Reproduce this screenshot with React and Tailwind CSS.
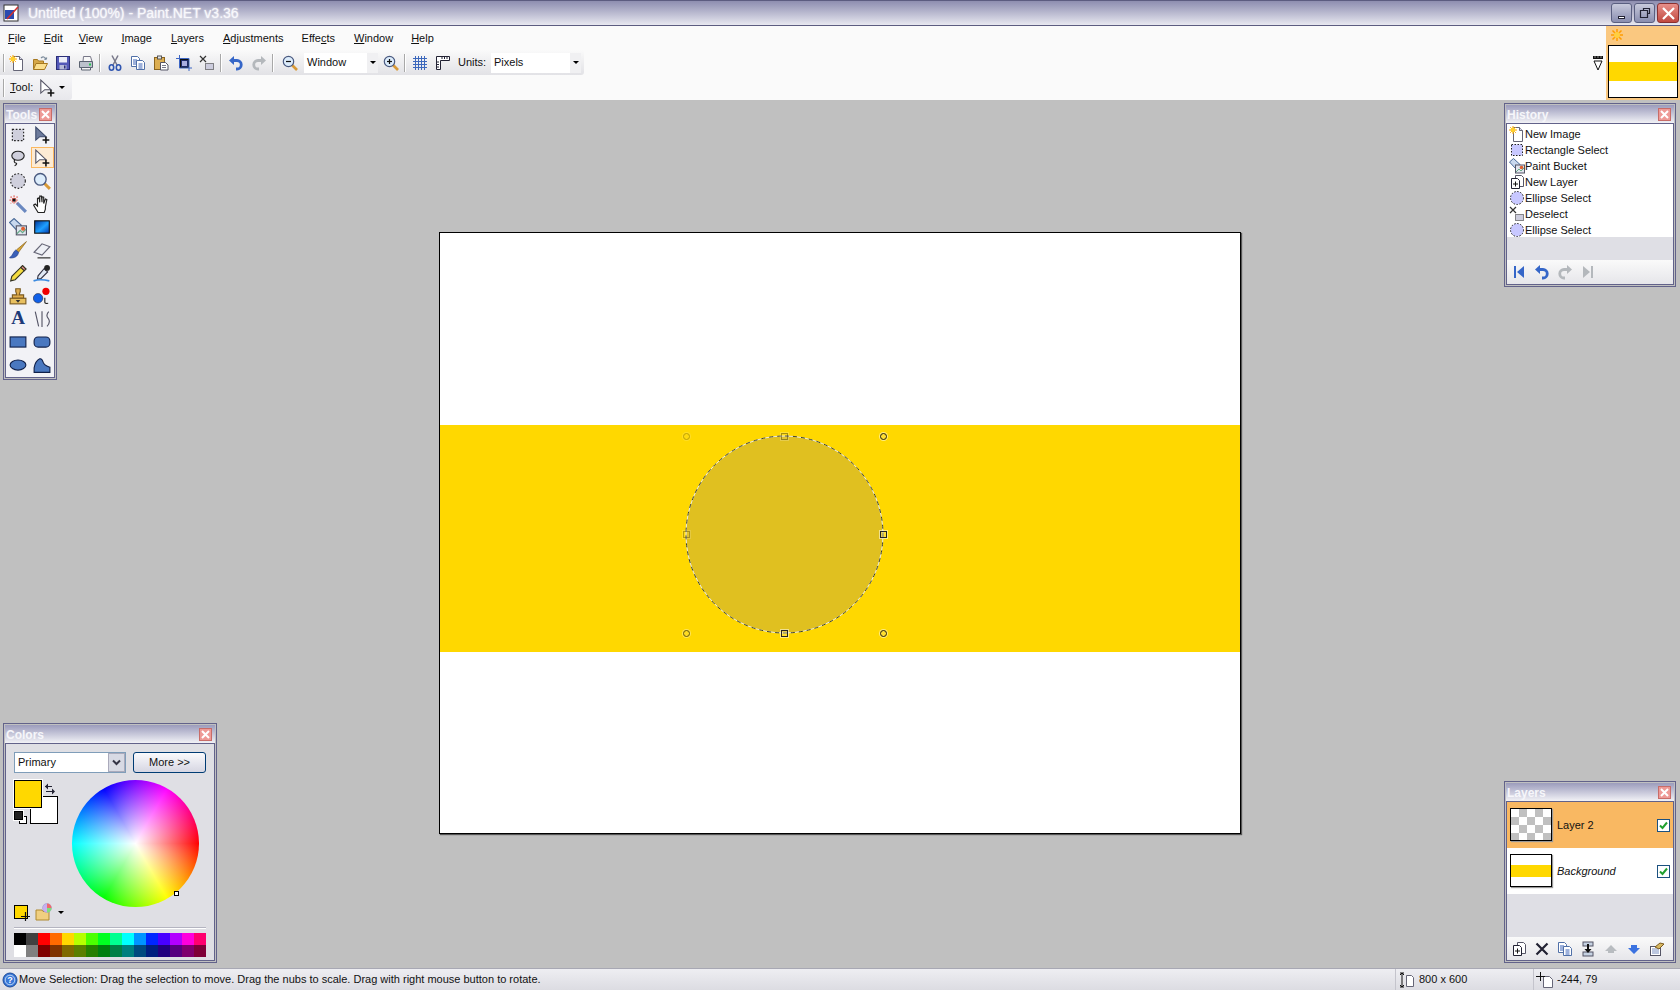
import React from "react";

const I = ({ children, s = 16, className = "" }) => (
  <svg width={s} height={s} viewBox="0 0 16 16" className={"block shrink-0 " + className}>{children}</svg>
);
const Star = () => (
  <g>
    <path d="M4 0v8M0 4h8M1.200 1.200l5.600 5.600M6.800 1.200l-5.600 5.600" stroke="#ffa000" strokeWidth="1" />
    <circle cx="4" cy="4" r="2.400" fill="#ffd02c" />
  </g>
);
const New = () => (
  <I>
    <path d="M4.500 1.500h6l3 3v11h-9z" fill="#fff" stroke="#667" />
    <path d="M10.500 1.500v3h3" fill="#dde" stroke="#667" />
    <Star />
  </I>
);
const Open = () => (
  <I>
    <path d="M1.500 4.500h4l1 1.500h5v8h-10z" fill="#d6a848" stroke="#a67820" />
    <path d="M4 8.500h11.500l-3 6h-11z" fill="#fbdf8e" stroke="#a67820" />
    <path d="M9 3q3-2.500 5 1M14 4.500l-1.800-.5M14 4.500l.8-2" fill="none" stroke="#7a8a9a" strokeWidth="1.200" />
  </I>
);
const Save = () => (
  <I>
    <rect x="1.500" y="1.500" width="13" height="13" fill="#5358b8" stroke="#2b2f78" />
    <rect x="4" y="2" width="8" height="5.500" fill="#eceef8" />
    <rect x="4.500" y="10" width="7" height="4.500" fill="#b6bad8" />
    <rect x="9" y="10.500" width="1.500" height="3" fill="#2b2f78" />
  </I>
);
const Print = () => (
  <I>
    <path d="M5.500 1.500h7l1.500 5h-9z" fill="#f8f8f8" stroke="#778" />
    <path d="M1.500 6.500h13v6h-13z" fill="#bcc2cc" stroke="#5a6270" />
    <path d="M3.500 12.500h9v2.500h-9z" fill="#f4f4f4" stroke="#5a6270" />
    <rect x="11" y="8.500" width="2" height="2" fill="#22c84c" />
  </I>
);
const Cut = () => (
  <I>
    <path d="M5 0.500l5 9.500M11 0.500l-5 9.500" stroke="#778" strokeWidth="1.500" />
    <ellipse cx="4.500" cy="12.500" rx="2.200" ry="2.700" fill="none" stroke="#2f55b0" strokeWidth="1.600" />
    <ellipse cx="11.500" cy="12.500" rx="2.200" ry="2.700" fill="none" stroke="#2f55b0" strokeWidth="1.600" />
  </I>
);
const Lines = ({ x, y, n = 3 }) => (
  <path d={Array.from({ length: n }, (_, i) => `M${x} ${y + i * 2}h4`).join("")} stroke="#3b62b8" />
);
const Copy = () => (
  <I>
    <path d="M1.500 1.500h6l2 2v8h-8z" fill="#fff" stroke="#5070a8" />
    <Lines x={3} y={5} />
    <path d="M6.500 5.500h6l2 2v7h-8z" fill="#fff" stroke="#5070a8" />
    <Lines x={8.500} y={9} n={3} />
  </I>
);
const Paste = () => (
  <I>
    <rect x="1.500" y="2.500" width="10" height="12" fill="#dcae52" stroke="#8a6420" />
    <rect x="4.500" y="1" width="4" height="3" fill="#e6e6e6" stroke="#555" />
    <path d="M7.500 7.500h5l2.500 2.500v5h-7.500z" fill="#fff" stroke="#556" />
    <path d="M9 10.500h4M9 12.500h4" stroke="#778" />
  </I>
);
const Crop = () => (
  <I>
    <rect x="4.500" y="4.500" width="8" height="8" fill="#1c2a68" stroke="#101010" />
    <rect x="6" y="6" width="5" height="5" fill="#a8aee0" />
    <path d="M3.500 0v13h13M0 3.500h13v13" fill="none" stroke="#3d66c4" />
  </I>
);
const Deselect = () => (
  <I>
    <path d="M1 1l6 6M7 1l-6 6" stroke="#333" strokeWidth="1.200" />
    <rect x="6.500" y="8.500" width="8" height="6" fill="#ccd" stroke="#222" strokeDasharray="1 1" />
  </I>
);
const Undo = ({ c = "#3566c8" }) => (
  <I>
    <path d="M4 5.500h5a3.600 3.600 0 0 1 0 8.500h-1" fill="none" stroke={c} strokeWidth="2.800" />
    <path d="M6 1v9l-5-4.500z" fill={c} />
  </I>
);
const Redo = ({ c = "#b4b8bc" }) => (
  <I>
    <path d="M12 5.500h-5a3.600 3.600 0 0 0 0 8.500h1" fill="none" stroke={c} strokeWidth="2.800" />
    <path d="M10 1v9l5-4.500z" fill={c} />
  </I>
);
const Mag = ({ sign, s = 16 }) => (
  <I s={s}>
    <path d="M10 10l5 5" stroke="#d89a38" strokeWidth="2.600" />
    <circle cx="6.500" cy="6.500" r="5.200" fill="#dcecfb" stroke="#4a5a80" strokeWidth="1.200" />
    {sign && <path d="M4 6.500h5" stroke="#111" strokeWidth="1.200" />}
    {sign === "+" && <path d="M6.500 4v5" stroke="#111" strokeWidth="1.200" />}
  </I>
);
const Grid = () => (
  <I><path d="M1 3.500h14M1 6.500h14M1 9.500h14M1 12.500h14M3.500 1v14M6.500 1v14M9.500 1v14M12.500 1v14" stroke="#3c68bc" /></I>
);
const Ruler = () => (
  <I>
    <path d="M1.500 1.500h13v4h-9v9h-4z" fill="#fff" stroke="#223" />
    <path d="M7 2v2M9.500 2v2M12 2v2M2 7h2M2 9.500h2M2 12h2" stroke="#223" />
  </I>
);
const Plus = () => <path d="M11.500 9.500v6M8.500 12.500h6" stroke="#111" strokeWidth="1.400" />;
const ArrowSel = ({ fill = "#fff", stroke = "#556" }) => (
  <I s={18}>
    <path d="M2.500 1v11.500l3.500-3h5.500z" fill={fill} stroke={stroke} />
    <Plus />
  </I>
);
const RectSel = () => (
  <I s={18}><rect x="3" y="3" width="10" height="10" fill="#cfcfdc" stroke="#222" strokeDasharray="1.500 1.500" /></I>
);
const Lasso = () => (
  <I s={18}>
    <ellipse cx="8" cy="6" rx="5.500" ry="4" fill="#cfcfdc" stroke="#222" />
    <path d="M5 9.500q-1 2.500 1 3t-1 2.500" fill="none" stroke="#222" />
  </I>
);
const EllSel = () => (
  <I s={18}><circle cx="8" cy="8" r="6.500" fill="#cfcfdc" stroke="#222" strokeDasharray="1.500 1.500" /></I>
);
const Wand = () => (
  <I s={18}>
    <path d="M7 7l8 8" stroke="#6a88c0" strokeWidth="2.800" />
    <path d="M4.500 0.500v8M0.500 4.500h8M1.500 1.500l6 6M7.500 1.500l-6 6" stroke="#e03020" strokeDasharray="1 1" />
    <circle cx="4.500" cy="4.500" r="1.500" fill="#111" />
  </I>
);
const Hand = () => (
  <I s={18}>
    <path d="M4.500 15.500l-4-6.500 1.500-1 2 2V3l1.500-.5.500 4V1h1.500l.5 5.500V1.500l1.500.5v5.500l1.500-4 1.300.5-1.300 6.500v2l-1 3z" fill="#fff" stroke="#222" />
  </I>
);
const Bucket = ({ s = 18 }) => (
  <I s={s}>
    <path d="M0.500 4l4-3.500 6.500 6-4 4.500z" fill="#c8d8ee" stroke="#4a6a98" />
    <rect x="6.500" y="7" width="9" height="8" fill="#dfe4ee" stroke="#556" />
    <path d="M7 14l3-3 2 2 3-3" fill="none" stroke="#6a8" />
    <circle cx="12.500" cy="9.500" r="1.800" fill="#e06030" />
  </I>
);
const GradIcon = () => (
  <I s={18}>
    <defs>
      <linearGradient id="tg" x1="0" y1="0" x2="1" y2="1">
        <stop offset="0" stopColor="#00349a" />
        <stop offset=".55" stopColor="#1ea0ff" />
        <stop offset="1" stopColor="#003ab0" />
      </linearGradient>
    </defs>
    <rect x="1.500" y="2.500" width="13" height="11" fill="url(#tg)" stroke="#111" />
  </I>
);
const Brush = () => (
  <I s={18}>
    <path d="M15.500 0.500l-9 7.500 2 2z" fill="#d8a838" stroke="#86601a" strokeWidth=".6" />
    <path d="M6 8c-2 1-2 4-5.500 7 4.500.5 7.500-1.500 8-5z" fill="#3a60b8" stroke="#24408a" strokeWidth=".6" />
  </I>
);
const Eraser = () => (
  <I s={18}>
    <path d="M1 10l7-7.500 7 2.500-7 7.500z" fill="#eef0f6" stroke="#667" />
    <path d="M4 15h11.500" stroke="#222" />
  </I>
);
const Pencil = () => (
  <I s={18}>
    <path d="M12 1.500l3 3-9.500 9.500-4 1 1-4z" fill="#f4dc40" stroke="#332" />
    <path d="M12 1.500l3 3-1.500 1.500-3-3z" fill="#e89090" stroke="#332" />
  </I>
);
const Picker = () => (
  <I s={18}>
    <path d="M10 4l3 3-6 6-3 .5.500-3z" fill="#dfe8f4" stroke="#334" />
    <circle cx="12.500" cy="3.500" r="2.600" fill="#222" />
    <path d="M0.500 15q6-2 14 0" fill="none" stroke="#3a8ae0" strokeWidth="1.500" />
  </I>
);
const Stamp = () => (
  <I s={18}>
    <path d="M6 1.500h4v2.500l-1 3h4v3H3V7h4L6 4z" fill="#e0ac4c" stroke="#7a5a20" />
    <rect x="1" y="10" width="14" height="5" fill="#e8c060" stroke="#7a5a20" />
    <path d="M6 11.500h4l-2 2.500z" fill="#333" />
  </I>
);
const Recolor = () => (
  <I s={18}>
    <circle cx="11.500" cy="3.800" r="3.200" fill="#f00000" />
    <circle cx="4.500" cy="10" r="4.200" fill="#1060e8" stroke="#223" strokeWidth=".5" />
    <path d="M10.500 9.500v4q0 1.500 3 1" fill="none" stroke="#222" />
  </I>
);
const LineIcon = () => (
  <I s={18}>
    <path d="M2 1.500l3 13M8 1v14" stroke="#556" />
    <path d="M14 1.500q-3 3-.5 6t-1 7" fill="none" stroke="#556" />
  </I>
);
const RectShape = () => (
  <I s={18}><rect x="1" y="3.500" width="14" height="9" fill="#4a78c0" stroke="#10204a" /></I>
);
const RoundShape = () => (
  <I s={18}><rect x="1" y="3.500" width="14" height="9" rx="3.500" fill="#4a78c0" stroke="#10204a" /></I>
);
const Ellipse = () => (
  <I s={18}><ellipse cx="8" cy="8" rx="7" ry="4.500" fill="#4a78c0" stroke="#10204a" /></I>
);
const Free = () => (
  <I s={18}><path d="M1 14.500v-4q1-6 5-8 2-.5 3 3 1 3 6 4.500v4.500z" fill="#4a78c0" stroke="#10204a" /></I>
);

const Sep = () => <div className="w-[2px] h-[18px] mx-[2px] border-l border-r border-l-[#a8a8a8] border-r-white" />;
const Tb = ({ children, className = "" }) => <div className={"w-[23px] h-[23px] shrink-0 flex items-center justify-center " + className}>{children}</div>;

const Caret = () => <div className="w-0 h-0 border-x-[3px] border-t-[3px] border-x-transparent border-t-black" />;
const Combo = ({ text, className }) => (
  <div className={"h-[20px] bg-white flex items-center pl-[3px] text-[11px] " + className}>
    <span className="flex-1">{text}</span>
    <div className="w-[11px] h-full bg-[#f0f0f2] flex items-center justify-center"><Caret /></div>
  </div>
);

const Close = () => (
  <div className="w-[13px] h-[13px] bg-[#ee9a96] border border-[#c86c68] flex items-center justify-center">
    <svg width="9" height="9" viewBox="0 0 9 9"><path d="M1 1l7 7M8 1l-7 7" stroke="#fff" strokeWidth="2" /></svg>
  </div>
);

const Panel = ({ title, className, children }) => (
  <div className={"absolute border border-[#62628a] bg-[#c0c0c0] p-px flex flex-col " + className}>
    <div className="h-[18px] shrink-0 bg-gradient-to-b from-[#9c9cbc] to-[#f2f2f6] flex items-center justify-between pl-[1px] pr-[3px]">
      <span className="text-[12px] font-bold text-[#f6f6fa] leading-none pt-[2px]">{title}</span>
      <Close />
    </div>
    <div className="flex-1 min-h-0 border border-[#62628a] flex flex-col overflow-hidden">{children}</div>
  </div>
);

const tools = [
  [<RectSel />, <ArrowSel fill="#6c7a9c" stroke="#3c4a6c" />],
  [<Lasso />, <ArrowSel />],
  [<EllSel />, <Mag s={18} />],
  [<Wand />, <Hand />],
  [<Bucket />, <GradIcon />],
  [<Brush />, <Eraser />],
  [<Pencil />, <Picker />],
  [<Stamp />, <Recolor />],
  [<span className="font-['Liberation_Serif',serif] font-bold text-[19px] leading-none text-[#1d3a78]">A</span>, <LineIcon />],
  [<RectShape />, <RoundShape />],
  [<Ellipse />, <Free />],
];

const NewLayer = () => (
  <I>
    <path d="M6.500 1.500h6l2 2v9h-8z" fill="#fff" stroke="#556" />
    <path d="M2.500 4.500h6l2 2v8h-8z" fill="#fff" stroke="#223" />
    <path d="M6.500 7.500v5M4 10h5" stroke="#111" />
  </I>
);
const EllH = () => (
  <I><circle cx="8" cy="8" r="6.500" fill="#c8c8ff" stroke="#222" strokeDasharray="1.500 1.500" /></I>
);
const history = [
  ["New Image", <New />],
  ["Rectangle Select", <I><rect x="2.500" y="2.500" width="11" height="11" fill="#c8c8ff" stroke="#222" strokeDasharray="1.500 1.500" /></I>],
  ["Paint Bucket", <Bucket s={16} />],
  ["New Layer", <NewLayer />],
  ["Ellipse Select", <EllH />],
  ["Deselect", <Deselect />],
  ["Ellipse Select", <EllH />],
];

const top = ["#000000", "#404040", "#ff0000", "#ff6a00", "#ffd800", "#b6ff00", "#4cff00", "#00ff21", "#00ff90", "#00ffff", "#0094ff", "#0026ff", "#4800ff", "#b200ff", "#ff00dc", "#ff006e"];
const bot = ["#ffffff", "#808080", "#7f0000", "#7f3300", "#7f6a00", "#5b7f00", "#267f00", "#007f0e", "#007f46", "#007f7f", "#004a7f", "#001f7f", "#21007f", "#57007f", "#7f006e", "#7f0037"];

const Check = () => (
  <div className="w-[13px] h-[13px] border border-[#1c5180] bg-white flex items-center justify-center">
    <svg width="9" height="9" viewBox="0 0 9 9"><path d="M1 4.500l2.500 2.500L8 1.500" fill="none" stroke="#22a030" strokeWidth="2" /></svg>
  </div>
);

const LayerRow = ({ name, className, italic, thumb }) => (
  <div className={"h-[46px] shrink-0 flex items-center pl-[3px] pr-[3px] " + className}>
    <div className="w-[42px] h-[33px] -mt-[1px] border border-black bg-white shrink-0 shadow-[1px_1px_1px_#999] overflow-hidden">{thumb}</div>
    <span className={"ml-[5px] flex-1 text-[11px] " + (italic ? "italic" : "")}>{name}</span>
    <Check />
  </div>
);

const Checker = () => (
  <div className="w-full h-full bg-white bg-[repeating-conic-gradient(#c0c0c0_0_25%,#ffffff_0_50%)] bg-[length:16px_16px]" />
);

const menus = [
  ["", "F", "ile", "ml-[8px]"],
  ["", "E", "dit", "ml-[18px]"],
  ["", "V", "iew", "ml-[16px]"],
  ["", "I", "mage", "ml-[19px]"],
  ["", "L", "ayers", "ml-[19px]"],
  ["", "A", "djustments", "ml-[19px]"],
  ["Effe", "c", "ts", "ml-[18px]"],
  ["", "W", "indow", "ml-[19px]"],
  ["", "H", "elp", "ml-[18px]"],
];

const Handle = ({ className, round }) => (
  <div className={"absolute w-[7px] h-[7px] -ml-[3.500px] -mt-[3.500px] border border-[#222] bg-[#ffffff30] shadow-[0_0_0_1px_#ffffff80] " + (round ? "rounded-full " : "") + className} />
);

export default function App() {
  return (
    <div className="relative w-[1680px] h-[990px] overflow-hidden bg-[#c0c0c0] flex flex-col font-['Liberation_Sans',sans-serif] text-[#111]">
      {/* Title bar */}
      <div className="h-[26px] shrink-0 border-y border-[#5c5c80] bg-gradient-to-b from-[#8e8eb0] to-[#e8e8f0] flex items-center relative">
        <svg width="18" height="18" viewBox="0 0 18 18" className="ml-[3px] block">
          <rect x="1" y="1" width="14" height="16" fill="#fff" stroke="#333" />
          <rect x="2" y="6" width="9" height="9" fill="#2a4ab0" />
          <path d="M4 15L15 3" stroke="#d03030" strokeWidth="1.600" />
        </svg>
        <span className="ml-[7px] text-[14px] text-[#f8f8fc] [text-shadow:0_0_2px_#ffffff]">Untitled (100%) - Paint.NET v3.36</span>
        <div className="absolute right-[1px] top-[2px] flex gap-[2px]">
          <div className="w-[21px] h-[20px] rounded-[3px] border border-[#5a5f80] bg-gradient-to-b from-[#c8cadc] to-[#8a8eb0] flex items-end justify-center pb-[3px]">
            <div className="w-[7px] h-[3px] bg-white border border-[#223]" />
          </div>
          <div className="w-[21px] h-[20px] rounded-[3px] border border-[#5a5f80] bg-gradient-to-b from-[#c8cadc] to-[#8a8eb0] flex items-center justify-center">
            <svg width="12" height="12" viewBox="0 0 12 12"><path d="M4.500 3.500v-2h6v5h-2M1.500 3.500h7v7h-7z" fill="none" stroke="#223" strokeWidth="1.200" /></svg>
          </div>
          <div className="w-[22px] h-[20px] rounded-[3px] border border-[#8a3030] bg-gradient-to-b from-[#e88f8a] to-[#c04840] flex items-center justify-center">
            <svg width="13" height="13" viewBox="0 0 13 13"><path d="M1 1l11 11M12 1L1 12" stroke="#fff" strokeWidth="2.200" /></svg>
          </div>
        </div>
      </div>

      {/* Menu + toolbars */}
      <div className="h-[74px] shrink-0 bg-[#fafafa] flex relative">
        <div className="flex-1 flex flex-col min-w-0">
          <div className="h-[24px] flex items-center text-[11px]">
            {menus.map(([a, b, c, m]) => (
              <span key={b} className={m}>{a}<u>{b}</u>{c}</span>
            ))}
          </div>
          <div className="h-[25px] w-[584px] bg-gradient-to-b from-[#fafafa] to-[#e2e2e6] rounded-r-[3px] flex items-center pl-[3px] text-[11px]">
            <div className="w-[2px] h-[18px] shrink-0 border-l border-r border-l-[#a8a8a8] border-r-white" />
            <Tb><New /></Tb><Tb><Open /></Tb><Tb><Save /></Tb><Tb><Print /></Tb>
            <Sep />
            <Tb><Cut /></Tb><Tb><Copy /></Tb><Tb><Paste /></Tb><Tb><Crop /></Tb><Tb><Deselect /></Tb>
            <Sep />
            <Tb><Undo /></Tb><Tb><Redo /></Tb>
            <Sep />
            <Tb className="ml-[2px]"><Mag sign="-" /></Tb>
            <Combo text="Window" className="w-[74px] ml-[3px]" />
            <Tb className="ml-[1px]"><Mag sign="+" /></Tb>
            <Sep />
            <Tb><Grid /></Tb><Tb><Ruler /></Tb>
            <span className="ml-[4px] w-[27px]">Units:</span>
            <Combo text="Pixels" className="w-[90px] ml-[6px]" />
          </div>
          <div className="h-[25px] w-[72px] bg-gradient-to-b from-[#f6f6f8] to-[#e8e8ec] rounded-r-[3px] flex items-center pl-[3px] text-[11px]">
            <div className="w-[2px] h-[18px] shrink-0 border-l border-r border-l-[#a8a8a8] border-r-white" />
            <span className="ml-[5px]"><u>T</u>ool:</span>
            <div className="ml-[5px]"><ArrowSel /></div>
            <div className="ml-[3px]"><Caret /></div>
          </div>
        </div>
        <div className="flex items-center pr-[3px]">
          <svg width="10" height="16" viewBox="0 0 10 16" className="block">
            <path d="M0 1h10v3H0z" fill="#111" />
            <path d="M1.500 2h1M4.500 2h1M7.500 2h1" stroke="#fff" />
            <path d="M1 6h8l-4 9z" fill="#fff" stroke="#111" />
          </svg>
        </div>
        <div className="w-[74px] bg-[#fac880] px-[2px] flex flex-col">
          <div className="h-[19px] pl-[3px] pt-[3px]">
            <svg width="12" height="12" viewBox="0 0 8 8"><path d="M4 0v8M0 4h8M1 1l6 6M7 1L1 7" stroke="#ff9c00" strokeWidth="1" /><circle cx="4" cy="4" r="2" fill="#ffcf40" /></svg>
          </div>
          <div className="h-[53px] border border-black bg-white flex flex-col justify-center">
            <div className="h-[19px] bg-[#ffd800]" />
          </div>
        </div>
      </div>

      {/* Workspace */}
      <div className="flex-1 min-h-0 flex items-center justify-center pb-[2px]">
        <div className="w-[802px] h-[602px] border border-black bg-white shadow-[1px_1px_1px_#555] relative shrink-0">
          <div className="mt-[192px] h-[227px] bg-[#ffd800]" />
          <div className="absolute left-[246px] top-[203px] w-[197px] h-[197px] rounded-full bg-[#e0c020]" />
          <svg width="199" height="199" viewBox="0 0 199 199" className="absolute left-[245px] top-[202px] block">
            <circle cx="99.500" cy="99.500" r="98.500" fill="none" stroke="#e8e8e8" />
            <circle cx="99.500" cy="99.500" r="98.500" fill="none" stroke="#444422" strokeDasharray="4 4" />
          </svg>
          <Handle round className="left-[246.500px] top-[203.500px] opacity-30" />
          <Handle round className="left-[443.500px] top-[203.500px]" />
          <Handle round className="left-[246.500px] top-[400.500px] opacity-70" />
          <Handle round className="left-[443.500px] top-[400.500px]" />
          <Handle className="left-[344.500px] top-[203.500px] opacity-40" />
          <Handle className="left-[344.500px] top-[400.500px]" />
          <Handle className="left-[246.500px] top-[301.500px] opacity-30" />
          <Handle className="left-[443.500px] top-[301.500px]" />
        </div>
      </div>

      {/* Status bar */}
      <div className="h-[22px] shrink-0 border-t border-[#a8a8b4] bg-gradient-to-b from-[#eeeef2] to-[#dcdce2] flex items-center text-[11px] relative">
        <svg width="16" height="16" viewBox="0 0 16 16" className="ml-[2px] block">
          <circle cx="8" cy="8" r="7" fill="#3a78d8" stroke="#1c4a98" />
          <circle cx="8" cy="8" r="4.800" fill="none" stroke="#bcd4f4" />
          <text x="8" y="11" fontSize="9" fontWeight="bold" fontFamily="Liberation Sans" textAnchor="middle" fill="#fff">?</text>
        </svg>
        <span className="ml-[1px] flex-1">Move Selection: Drag the selection to move. Drag the nubs to scale. Drag with right mouse button to rotate.</span>
        <div className="w-[138px] h-full flex items-center border-l border-[#c4c4cc] pl-[3px]">
          <svg width="16" height="16" viewBox="0 0 16 16" className="block">
            <path d="M7.500 3.500h5l2 2v9h-7z" fill="#fff" stroke="#667" />
            <path d="M3 1v14M1 3l2-2 2 2M1 13l2 2 2-2M1 1h4M1 15h4" fill="none" stroke="#111" />
          </svg>
          <span className="ml-[4px]">800 x 600</span>
        </div>
        <div className="w-[147px] h-full flex items-center border-l border-[#c4c4cc] pl-[2px]">
          <svg width="18" height="16" viewBox="0 0 18 16" className="block">
            <path d="M7.500 4.500h6l3 3v8h-9z" fill="#fff" stroke="#667" />
            <path d="M4.500 0v9M0 4.500h9" stroke="#111" />
          </svg>
          <span className="ml-[3px]">-244, 79</span>
        </div>
      </div>

      {/* Tools */}
      <Panel title="Tools" className="left-[3px] top-[103px] w-[54px] h-[277px]">
        <div className="flex-1 bg-[#f2f2f6]">
          <div className="-mt-[1px] grid grid-cols-2 content-start justify-items-center">
            {tools.flat().map((t, i) => (
              <div key={i} className="w-[23px] h-[23px] flex items-center justify-center relative">
                {i === 3 && <div className="absolute left-0 right-0 top-px bottom-px bg-[#fdebd4] border border-[#fbb860]" />}
                <div className="relative">{t}</div>
              </div>
            ))}
          </div>
        </div>
      </Panel>

      {/* History */}
      <Panel title="History" className="left-[1504px] top-[103px] w-[172px] h-[184px]">
        <div className="h-[113px] bg-white pt-[2px] shrink-0">
          {history.map(([n, ic], i) => (
            <div key={i} className="h-[16px] flex items-center pl-[2px] text-[11px] leading-none">
              <div className="w-[16px] -mr-[1px] flex justify-center">{ic}</div>
              <span className="ml-[1px]">{n}</span>
            </div>
          ))}
        </div>
        <div className="h-[23px] bg-[#dfdfe5] shrink-0" />
        <div className="flex-1 bg-gradient-to-b from-[#fafafa] to-[#e6e6ea] flex items-center">
          <Tb><I><path d="M3 2h2v12H3z" fill="#3566c8" /><path d="M13 2v12L6 8z" fill="#3566c8" /></I></Tb>
          <Tb><Undo /></Tb>
          <Tb><Redo /></Tb>
          <Tb><I><path d="M3 2v12l7-6z" fill="#b4b8bc" /><path d="M11 2h2v12h-2z" fill="#b4b8bc" /></I></Tb>
        </div>
      </Panel>

      {/* Layers */}
      <Panel title="Layers" className="left-[1504px] top-[781px] w-[172px] h-[182px]">
        <LayerRow name="Layer 2" className="bg-[#f9b862]" thumb={<Checker />} />
        <LayerRow
          name="Background"
          italic
          className="bg-white"
          thumb={<div className="h-full flex flex-col justify-center"><div className="h-[12px] bg-[#ffd800]" /></div>}
        />
        <div className="flex-1 bg-[#dfdfe5]" />
        <div className="h-[23px] bg-gradient-to-b from-[#fafafa] to-[#e6e6ea] flex items-center shrink-0">
          <Tb><NewLayer /></Tb>
          <Tb><I><path d="M2.500 2.500l11 11M13.500 2.500l-11 11" stroke="#223" strokeWidth="2.200" /></I></Tb>
          <Tb><Copy /></Tb>
          <Tb>
            <I>
              <rect x="3" y="1" width="10" height="4" fill="#c6d2e2" stroke="#556" />
              <rect x="3" y="11" width="10" height="4" fill="#c6d2e2" stroke="#556" />
              <path d="M8 3v8" stroke="#111" strokeWidth="2" />
              <path d="M4.500 8h7L8 12z" fill="#111" />
            </I>
          </Tb>
          <Tb><I><path d="M8 4l6 6h-3v2H5v-2H2z" fill="#b8bcc0" /></I></Tb>
          <Tb><I><path d="M8 13L2 7h3V4h6v3h3z" fill="#3b72e0" /></I></Tb>
          <Tb>
            <I>
              <rect x="1.500" y="5.500" width="10" height="9" fill="#fff" stroke="#556" />
              <path d="M3 8h7M3 10h7M3 12h7" stroke="#7a90c0" />
              <path d="M6 6l5-4 4 1-5 5z" fill="#d8b860" stroke="#7a5a20" />
            </I>
          </Tb>
        </div>
      </Panel>

      {/* Colors */}
      <Panel title="Colors" className="left-[3px] top-[723px] w-[214px] h-[240px]">
        <div className="flex-1 bg-[#dfdfe4] flex flex-col pt-[8px] px-[8px]">
          <div className="flex items-center justify-between">
            <div className="w-[112px] h-[21px] border border-[#7f9db9] bg-white flex items-center pl-[3px] text-[11px]">
              <span className="flex-1">Primary</span>
              <div className="w-[17px] h-[19px] bg-[#d8dae4] border border-[#aab] flex items-center justify-center">
                <svg width="9" height="7" viewBox="0 0 9 7"><path d="M1 1.500l3.500 3.500L8 1.500" fill="none" stroke="#334" strokeWidth="2" /></svg>
              </div>
            </div>
            <div className="w-[73px] h-[21px] rounded-[3px] border border-[#003c74] bg-gradient-to-b from-[#fafafc] to-[#d6d6e2] flex items-center justify-center text-[11px]">More &gt;&gt;</div>
          </div>
          <div className="flex mt-[7px] h-[128px]">
            <div className="w-[58px] shrink-0 relative">
              <div className="absolute left-[16px] top-[16px] w-[28px] h-[28px] border border-black bg-white" />
              <div className="absolute left-0 top-0 w-[28px] h-[28px] border border-black outline outline-1 outline-white bg-[#ffd800]" />
              <svg width="12" height="12" viewBox="0 0 12 12" className="absolute left-[30px] top-[3px] block">
                <path d="M1 3.500h7M9 8.500H2" stroke="#223" strokeWidth="1.200" />
                <path d="M4 0.500v6L1 3.500zM8 5.500v6l3-3z" fill="#223" />
              </svg>
              <div className="absolute left-[5px] top-[36px] w-[8px] h-[8px] border border-black bg-white" />
              <div className="absolute left-0 top-[31px] w-[9px] h-[9px] border border-black bg-[#222] outline outline-1 outline-white" />
            </div>
            <div className="w-[127px] h-[127px] shrink-0 rounded-full relative bg-[conic-gradient(from_90deg,#ff0000,#ffff00,#00ff00,#00ffff,#0000ff,#ff00ff,#ff0000)]">
              <div className="absolute inset-0 rounded-full bg-[radial-gradient(closest-side,#ffffff,#ffffff00)]" />
              <div className="absolute left-[102px] top-[111px] w-[5px] h-[5px] border border-black bg-white" />
            </div>
          </div>
          <div className="flex items-center h-[14px] -mt-[3px]">
            <div className="w-[14px] h-[14px] relative border border-black bg-[#ffd800]">
              <svg width="9" height="9" viewBox="0 0 9 9" className="absolute -right-[3px] -bottom-[3px] block"><path d="M4.500 0v9M0 4.500h9" stroke="#111" strokeWidth="1.200" /></svg>
            </div>
            <svg width="18" height="18" viewBox="0 0 18 18" className="ml-[7px] block">
              <path d="M1 7h6l1 1.500h6V17H1z" fill="#f0cf80" stroke="#b08a30" />
              <circle cx="12" cy="5" r="4.500" fill="#c8b0f0" stroke="#88b" strokeWidth=".4" />
              <path d="M12 5L12 .5A4.500 4.500 0 0 1 16.500 5z" fill="#f06a6a" />
              <path d="M12 5l4.500 0A4.500 4.500 0 0 1 12 9.500z" fill="#7ce07c" />
            </svg>
            <div className="ml-[5px]"><Caret /></div>
          </div>
          <div className="h-[2px] bg-[#b4b4c0] border-b border-white mt-[8px] mb-[4px] shrink-0" />
          <div className="flex">{top.map((c, i) => <div key={i} className="w-[12px] h-[12px] shrink-0" style={{ background: c }} />)}</div>
          <div className="flex">{bot.map((c, i) => <div key={i} className="w-[12px] h-[12px] shrink-0" style={{ background: c }} />)}</div>
        </div>
      </Panel>
    </div>
  );
}
